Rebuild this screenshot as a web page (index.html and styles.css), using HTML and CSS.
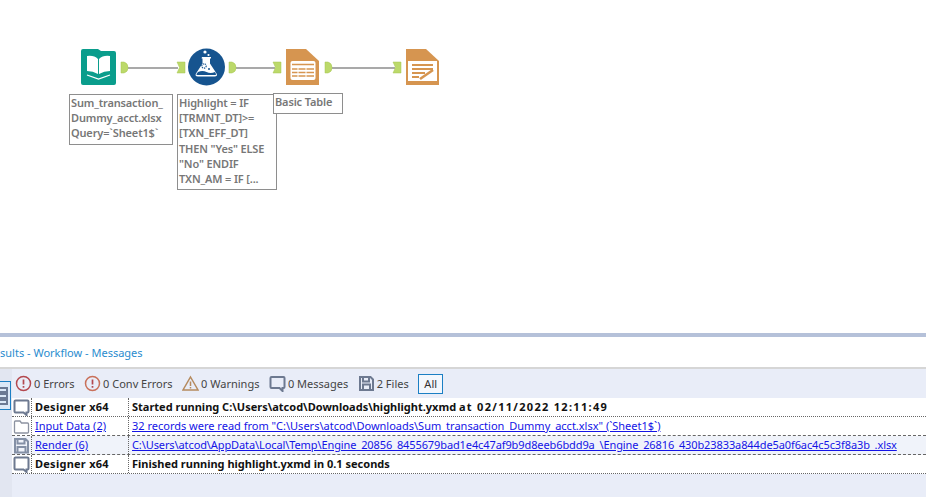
FILE: index.html
```html
<!DOCTYPE html>
<html lang="en">
<head>
<meta charset="utf-8">
<title>Workflow</title>
<link rel="stylesheet" href="styles.css">
</head>
<body>
<main class="app">
  <section class="canvas">
    <svg class="wires" width="926" height="333" viewBox="0 0 926 333">
      <path class="wire" d="M128 68H178M236 68H275M332 68H395"/>
      <g class="anchor">
        <path d="M121 62h3q4 1 4 5.500t-4 5.500h-3z"/>
        <path d="M229 62h3q4 1 4 5.500t-4 5.500h-3z"/>
        <path d="M325 62h3q4 1 4 5.500t-4 5.500h-3z"/>
        <path d="M177 62h8v11h-8l2.500-5.500z"/>
        <path d="M273 62h8v11h-8l2.500-5.500z"/>
        <path d="M393 62h8v11h-8l2.500-5.500z"/>
      </g>
      <g>
        <path class="teal" d="M83 49h15l3 2h13q2 0 2 2v30q0 2-2 2H83q-2 0-2-2V51q0-2 2-2z"/>
        <path class="page" d="M87 56q7-1 11 3v15q-5-3-11-3zM110 56q-7-1-11 3v15q5-3 11-3z"/>
        <path class="page-line" d="M87 75l11.500 4 11.500-4"/>
      </g>
      <g>
        <circle class="blue" cx="206.500" cy="67" r="18.500"/>
        <circle class="page" cx="205" cy="52" r="1.600"/>
        <circle class="page" cx="208.500" cy="55" r="1.100"/>
        <path class="page" d="M202 57h9v1.500h-1v5l6.500 10q1.500 3-2 3h-16.500q-3.500 0-2-3l6.500-10v-5h-1z"/>
        <path class="blue" d="M198 72q4.500-2 8.500 0t8.500 0l1 2q.5 1-1 1h-17.500q-1.500 0-1-1z"/>
        <circle class="gear" cx="204" cy="66" r="2.200"/>
        <circle class="blue" cx="209" cy="69" r="1"/>
      </g>
      <g>
        <path class="orange" d="M286 49h20l13 12v24h-33z"/>
        <rect class="page" x="290.500" y="61" width="25" height="19" rx="2"/>
        <path class="orange-line" d="M292 64.500h22M292 69h22M292 72.500h22M292 76h22"/>
        <path class="page-stroke" d="M298 67v12M306 67v12"/>
      </g>
      <g>
        <path class="orange" d="M406 49h20l13 12v24h-33z"/>
        <rect class="page" x="408" y="61" width="29" height="20"/>
        <path class="orange-line wide" d="M412 65h21M412 69h21M412 73h13M412 77h7"/>
        <path class="orange-line wider" d="M420 79l13-9"/>
      </g>
    </svg>
    <p class="note note-input">Sum_transaction_<br>Dummy_acct.xlsx<br>Query=`Sheet1$`</p>
    <p class="note note-formula">Highlight = IF<br>[TRMNT_DT]&gt;=<br>[TXN_EFF_DT]<br>THEN "Yes" ELSE<br>"No" ENDIF<br>TXN_AM = IF [...</p>
    <p class="note note-table">Basic Table</p>
  </section>

  <div class="splitter"></div>

  <section class="results">
    <header class="results-title">
      <h2 class="crumb">sults - Workflow - Messages</h2>
    </header>
    <div class="results-body">
      <aside class="side">
        <span class="grip"></span>
        <button class="side-button" type="button" aria-label="Layout">
          <svg width="8" height="18" viewBox="0 0 8 18"><path class="side-glyph" d="M-1 1h8v4H-1zM-1 7h8v4H-1zM-1 13h8v4H-1z"/></svg>
        </button>
      </aside>
      <div class="log">
        <div class="filters">
          <span class="filter">
            <svg width="17" height="17" viewBox="0 0 17 17"><circle class="ring-red" cx="8.500" cy="8.500" r="7"/><path class="mark-red" d="M8.500 4.500v5M8.500 11v1.800"/></svg>0 Errors
          </span>
          <span class="filter">
            <svg width="17" height="17" viewBox="0 0 17 17"><circle class="ring-orange" cx="8.500" cy="8.500" r="7"/><path class="mark-red" d="M8.500 4.500v5M8.500 11v1.800"/></svg>0 Conv Errors
          </span>
          <span class="filter">
            <svg width="17" height="17" viewBox="0 0 17 17"><path class="ring-tan" d="M8.500 2L16 15H1z"/><path class="mark-tan" d="M8.500 6.500v4.500M8.500 12v1.500"/></svg>0 Warnings
          </span>
          <span class="filter">
            <svg width="17" height="17" viewBox="0 0 17 17"><path class="ico" d="M2.500 2h12q1 0 1 1v9q0 1-1 1h-1v3l-3-3h-8q-1 0-1-1V3q0-1 1-1z"/></svg>0 Messages
          </span>
          <span class="filter">
            <svg width="17" height="17" viewBox="0 0 17 17"><path class="ico" d="M2 2h10.500L15 4.500V15H2zM5 2.500v4h6v-4M5 15V9.500h7V15"/></svg>2 Files
          </span>
          <span class="filter-all">All</span>
        </div>
        <div class="row">
          <span class="cell-icon"><svg width="17" height="17" viewBox="0 0 17 17"><path class="ico" d="M2.500 1.500h12q1 0 1 1v10q0 1-1 1h-1v2.500l-3-2.500h-8q-1 0-1-1v-10q0-1 1-1z"/></svg></span>
          <span class="cell-tool bold">Designer x64</span>
          <span class="cell-msg bold">Started running C:\Users\atcod\Downloads\highlight.yxmd <span class="stamp">at 02/11/2022 12:11:49</span></span>
        </div>
        <div class="row row-before-selected">
          <span class="cell-icon"><svg width="17" height="17" viewBox="0 0 17 17"><path class="ico-light" d="M2.500 3h4.500l1.500 2h6q1 0 1 1v8q0 1-1 1h-12q-1 0-1-1V4q0-1 1-1z"/></svg></span>
          <span class="cell-tool"><a class="link" href="#input">Input Data (2)</a></span>
          <span class="cell-msg"><a class="link" href="#records">32 records were read from "C:\Users\atcod\Downloads\Sum_transaction_Dummy_acct.xlsx" (`Sheet1$`)</a></span>
        </div>
        <div class="row row-selected">
          <span class="cell-icon"><svg width="17" height="17" viewBox="0 0 17 17"><path class="ico-save" d="M2 2h10.500L15 4.500V15.500H2zM4.500 2.500v4h7v-4M4.500 15.500V10h8v5.500"/></svg></span>
          <span class="cell-tool"><a class="link" href="#render">Render (6)</a></span>
          <span class="cell-msg"><a class="link link-path" href="#file">C:\Users\atcod\AppData\Local\Temp\Engine_20856_8455679bad1e4c47af9b9d8eeb6bdd9a_\Engine_26816_430b23833a844de5a0f6ac4c5c3f8a3b_.xlsx</a></span>
        </div>
        <div class="row">
          <span class="cell-icon"><svg width="17" height="17" viewBox="0 0 17 17"><path class="ico" d="M2.500 1.500h12q1 0 1 1v10q0 1-1 1h-1v2.500l-3-2.500h-8q-1 0-1-1v-10q0-1 1-1z"/></svg></span>
          <span class="cell-tool bold">Designer x64</span>
          <span class="cell-msg bold">Finished running highlight.yxmd in 0.1 seconds</span>
        </div>
      </div>
    </div>
  </section>
</main>
</body>
</html>
```
FILE: styles.css
```css
* { box-sizing: border-box; }
html, body { margin: 0; padding: 0; height: 100%; overflow: hidden; }
body {
  background: #fff;
  font-family: "Noto Sans", "Liberation Sans", sans-serif;
  font-size: 11px;
  color: #333;
}
.app { width: 926px; height: 497px; display: flex; flex-direction: column; }

.canvas { position: relative; height: 333px; flex: none; background: #fff; }
.wires { display: block; }
.wire { fill: none; stroke: #a9a9a9; stroke-width: 2; }
.anchor path { fill: #bcd96a; stroke: #a7c653; stroke-width: .5; }
.teal { fill: #0a9d8c; }
.page { fill: #fff; }
.page-stroke { fill: none; stroke: #fff; stroke-width: 1; }
.page-line { fill: none; stroke: #fff; stroke-width: 1.300; }
.blue { fill: #16548f; }
.gear { fill: none; stroke: #16548f; stroke-width: 1.200; stroke-dasharray: 1.200 .8; }
.orange { fill: #d69550; }
.orange-line { fill: none; stroke: #d69550; stroke-width: 1.500; }
.orange-line.wide { stroke-width: 2; }
.orange-line.wider { stroke-width: 2.600; }

.note {
  position: absolute;
  margin: 0;
  padding: 0 0 0 1px;
  background: #fff;
  border: 1px solid #8e8e8e;
  color: #777;
  font-weight: 600;
  font-size: 11px;
  letter-spacing: -.15px;
  line-height: 15.200px;
  white-space: nowrap;
}
.note-input { left: 69px; top: 94px; width: 104px; height: 51px; }
.note-formula { left: 177px; top: 94px; width: 100px; height: 96px; }
.note-table { left: 273px; top: 93px; width: 70px; height: 21px; }

.splitter { height: 4px; flex: none; background: #b5c1d9; }

.results { flex: 1; display: flex; flex-direction: column; min-height: 0; }
.results-title {
  height: 32px;
  flex: none;
  display: flex;
  align-items: center;
  border-bottom: 2px solid #d6d6d6;
  overflow: hidden;
}
.crumb { margin: 0; font-size: 11px; font-weight: 400; color: #2a8cce; }

.results-body { flex: 1; display: flex; min-height: 0; background: #e9edf8; }
.side { width: 12px; flex: none; background: #e2e6f1; display: flex; flex-direction: column; }
.grip { height: 12px; flex: none; }
.side-button {
  width: 11px;
  height: 29px;
  padding: 0;
  background: #dbe9f8;
  border: 1px solid #1b7fc4;
  border-left: 0;
  display: flex;
  align-items: center;
  justify-content: flex-start;
}
.side-glyph { fill: none; stroke: #6b7a94; stroke-width: 2; }

.log { flex: 1; min-width: 0; display: flex; flex-direction: column; }
.filters { height: 29px; flex: none; display: flex; align-items: center; padding-left: 3px; gap: 9.500px; color: #444; font-size: 11px; }
.filter { display: flex; align-items: center; gap: 2px; white-space: nowrap; }
.filter-all { width: 25px; height: 20px; border: 1px solid #1b7fc4; background: #f3f7fd; text-align: center; line-height: 17px; color: #333; }
.ring-red { fill: none; stroke: #b3484f; stroke-width: 1.500; }
.ring-orange { fill: none; stroke: #c9705a; stroke-width: 1.500; }
.mark-red { fill: none; stroke: #b3484f; stroke-width: 1.700; }
.ring-tan { fill: none; stroke: #b58a5e; stroke-width: 1.500; }
.mark-tan { fill: none; stroke: #b58a5e; stroke-width: 1.500; }
.ico { fill: none; stroke: #6d7990; stroke-width: 2; }
.ico-light { fill: none; stroke: #8d93a1; stroke-width: 1.300; }
.ico-save { fill: none; stroke: #8490a6; stroke-width: 2; }

.row {
  height: 19px;
  flex: none;
  display: flex;
  background: #fff;
  border-bottom: 1px dotted #666;
  line-height: 17px;
  white-space: nowrap;
  font-size: 11px;
}
.row-selected { background: #f0f3fa; border-bottom-style: dashed; }
.row-before-selected { border-bottom-style: dashed; }
.cell-icon { width: 20px; flex: none; border-right: 1px dotted #666; padding-left: 1px; display: flex; align-items: center; }
.cell-tool { width: 97px; flex: none; border-right: 1px dotted #666; padding-left: 3px; }
.cell-tool.bold { letter-spacing: .25px; }
.cell-msg { flex: 1; padding-left: 3px; min-width: 0; overflow: hidden; }
.bold { font-weight: 700; color: #111; }
.stamp { letter-spacing: 1.300px; }
.link { color: #1414e6; text-decoration: underline; }
.link-path { letter-spacing: -.1px; }
```
